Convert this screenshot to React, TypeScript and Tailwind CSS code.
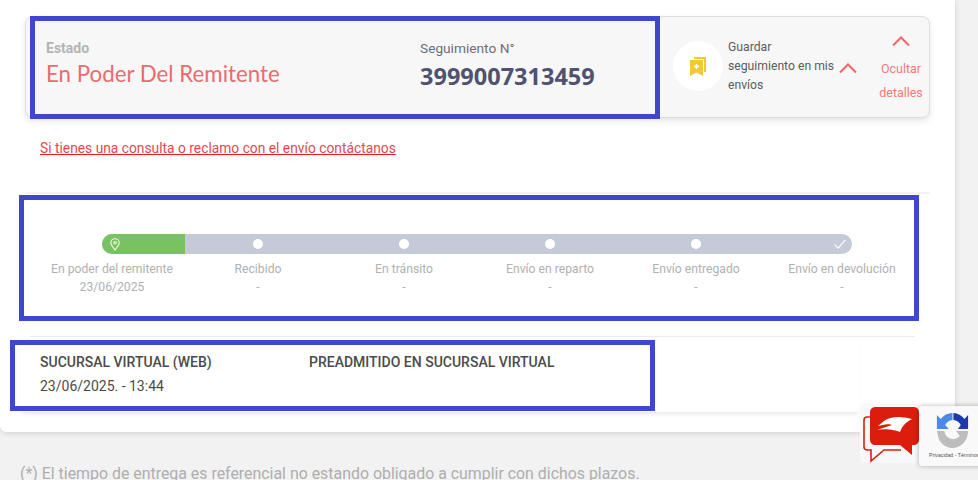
import React from "react";

const steps = [
  { label: "En poder del remitente", date: "23/06/2025" },
  { label: "Recibido", date: "-" },
  { label: "En tránsito", date: "-" },
  { label: "Envío en reparto", date: "-" },
  { label: "Envío entregado", date: "-" },
  { label: "Envío en devolución", date: "-" },
];

function Chevron({ className }: { className: string }) {
  return (
    <svg viewBox="0 0 18 10" className={className} fill="none" stroke="#f2636b" strokeWidth="2">
      <path d="M1 9.5 L9 1.5 L17 9.5" />
    </svg>
  );
}

function SaveIcon() {
  return (
    <svg viewBox="0 0 16 19" className="h-[19px] w-4">
      <path d="M4 0 H16 V15 H14 V2 H4 Z" fill="#f2c935" />
      <path d="M0 3 H13 V19 L6.5 15.5 L0 19 Z" fill="#f2c935" />
      <path d="M6.5 7 V12 M4 9.5 H9" stroke="#fff" strokeWidth="1.6" />
    </svg>
  );
}

function Pin() {
  return (
    <svg viewBox="0 0 12 15" className="h-[13px] w-[10px]" fill="none" stroke="#f2f8d8" strokeWidth="1.4">
      <path d="M6 14 C3 10 1 8 1 5.4 A5 4.8 0 0 1 11 5.4 C11 8 9 10 6 14 Z" />
      <circle cx="6" cy="5.4" r="1.5" />
    </svg>
  );
}

function ChatLogo() {
  return (
    <svg viewBox="0 0 60 60" className="h-[60px] w-[60px]">
      <path d="M10 14 H7 C5 14 4 15 4 17 V44 C4 46 6 47 8 47 H11 V58 L24 47 H41" fill="none" stroke="#dc1f0e" strokeWidth="1.6" />
      <path d="M16 4 H53 C57 4 59 6 59 10 V36 C59 40 57 42 53 42 H52 V52 L40 42 H16 C12 42 10 40 10 36 V10 C10 6 12 4 16 4 Z" fill="#dc1c0c" />
      <path d="M52 16 C42 13 30 13 24 18 L18 23 C26 21 30 21 32 22 L17 27 C25 25 36 27 40 29 C42 23 46 19 52 16 Z" fill="#fff" />
    </svg>
  );
}

function Recaptcha() {
  return (
    <svg viewBox="0 0 36 36" preserveAspectRatio="none" className="h-[36px] w-[33px]">
      <path d="M18 1 A17 17 0 0 0 5 7 L1 3 V17 H14 L10 13 A10 10 0 0 1 18 8 Z" fill="#4a89e8" />
      <path d="M19 1 A17 17 0 0 1 31 7 L35 3 V17 H24 L27 13 A10 10 0 0 0 19 8 Z" fill="#1c3aa9" />
      <path d="M1 19 H9 A10 10 0 0 0 26 24 L22 19 H35 A17 17 0 0 1 3 27 Z" fill="#bdbdbd" />
    </svg>
  );
}

export default function App() {
  return (
    <div className="relative h-[480px] w-[978px] overflow-hidden bg-[#f2f2f2] font-['Roboto',sans-serif]">
      <div className="h-[432px] w-[955px] rounded-b-[6px] bg-white pt-4 shadow-[0_1px_6px_rgba(0,0,0,0.15)]">
        {/* tracking header */}
        <div className="ml-[25px] flex h-[102px] w-[905px] rounded-[8px] border border-[#dedede] bg-[#f7f7f7] shadow-[0_3px_6px_rgba(0,0,0,0.1)]">
          <div className="flex w-[634px] pl-5 pt-[22px]">
            <div className="w-[374px]">
              <div className="text-[14px] font-bold leading-[18px] text-[#b4b4b4]">Estado</div>
              <div className="mt-[2px] font-['Lato',sans-serif] text-[22.3px] leading-[30px] text-[#e96c70]">En Poder Del Remitente</div>
            </div>
            <div>
              <div className="text-[13.7px] leading-[18px] text-[#6b6e7c]">Seguimiento N°</div>
              <div className="mt-[4px] font-['Noto_Sans',sans-serif] text-[23.5px] font-bold leading-[30px] text-[#4f5270]">3999007313459</div>
            </div>
          </div>
          <div className="flex flex-1 items-center pb-[2px]">
            <div className="ml-[13px] flex h-[50px] w-[50px] items-center justify-center rounded-full bg-white">
              <SaveIcon />
            </div>
            <div className="ml-[5px] w-[111px] text-[12.2px] leading-[19px] text-[#5d5d5d]">Guardar seguimiento en mis envíos</div>
            <Chevron className="mt-[3px] h-[10px] w-[18px]" />
            <div className="ml-[19px] flex w-[50px] flex-col items-center self-start pt-[19px] text-center text-[12.4px] leading-[24px] text-[#f4777d]">
              <Chevron className="mb-[11px] h-[10px] w-[18px]" />
              <span>Ocultar detalles</span>
            </div>
          </div>
        </div>

        <div className="ml-10 mt-5 text-[13.8px] leading-5">
          <a className="text-[#e5474f] underline decoration-[#ed1c24]">Si tienes una consulta o reclamo con el envío contáctanos</a>
        </div>

        <div className="ml-[25px] mt-[34px] h-[2px] w-[905px] bg-[#f3f3f3]" />

        {/* progress */}
        <div className="ml-[39px] mt-10 w-[876px]">
          <div className="relative ml-[63px] flex h-5 w-[750px] items-center overflow-hidden rounded-full bg-[#c5cad8]">
            <div className="flex h-5 w-[83px] items-center bg-[#78c264] pl-[8px]">
              <Pin />
            </div>
          </div>
          <div className="-mt-5 grid grid-cols-6">
            {steps.map((s, i) => (
              <div key={s.label} className="flex flex-col items-center">
                <div className="flex h-5 items-center">
                  {i > 0 && i < 5 && <div className="relative h-[10px] w-[10px] rounded-full bg-white" />}
                  {i === 5 && (
                    <svg viewBox="0 0 14 11" className="relative -ml-1 h-[10px] w-[14px]" fill="none" stroke="#fff" strokeWidth="1.2">
                      <path d="M1 6 L5 10 L13 1" />
                    </svg>
                  )}
                </div>
                <div className="mt-[6px] whitespace-nowrap text-[12.2px] leading-[18px] text-[#b1b1b1]">{s.label}</div>
                <div className="text-[12.2px] leading-[18px] text-[#b1b1b1]">{s.date}</div>
              </div>
            ))}
          </div>
        </div>

        <div className="ml-[30px] mt-10 h-[1px] w-[885px] bg-[#e8ecef]" />

        {/* last event */}
        <div className="ml-[20px] h-[75px] w-[840px] rounded-b-[4px] pl-[20px] pt-[15px] shadow-[0_4px_4px_-2px_rgba(0,0,0,0.1)]">
          <div className="flex text-[14px] font-medium leading-[20px] text-[#4b4b4b]">
            <div className="w-[269px]">SUCURSAL VIRTUAL (WEB)</div>
            <div>PREADMITIDO EN SUCURSAL VIRTUAL</div>
          </div>
          <div className="mt-[4px] text-[14px] leading-[20px] text-[#4b4b4b]">23/06/2025. - 13:44</div>
        </div>
      </div>

      <p className="ml-5 mt-[32px] whitespace-nowrap text-[15.9px] leading-5 text-[#aeaeae]">
        (*) El tiempo de entrega es referencial no estando obligado a cumplir con dichos plazos.
      </p>

      {/* annotation rectangles */}
      <div className="absolute left-[30px] top-[16px] h-[103px] w-[630px] border-[5px] border-[#3f48cc]" />
      <div className="absolute left-[19px] top-[195px] h-[126px] w-[900px] border-[5px] border-[#3f48cc]" />
      <div className="absolute left-[10px] top-[340px] h-[71px] w-[645px] border-[5px] border-[#3f48cc]" />

      {/* floating widgets */}
      <div className="absolute left-[860px] top-[403px] rounded-md bg-[#f8f8fa]">
        <ChatLogo />
      </div>
      <div className="absolute left-[919px] top-[406px] h-[60px] w-[70px] rounded-l-[3px] bg-[#f9f9f9] pt-[6px] shadow-[0_0_5px_rgba(0,0,0,0.3)]">
        <div className="ml-[17px]">
          <Recaptcha />
        </div>
        <div className="ml-[10px] mt-[3px] whitespace-nowrap font-['Liberation_Sans',sans-serif] text-[5.2px] leading-[8px] text-[#555]">Privacidad - Términos</div>
      </div>
    </div>
  );
}
